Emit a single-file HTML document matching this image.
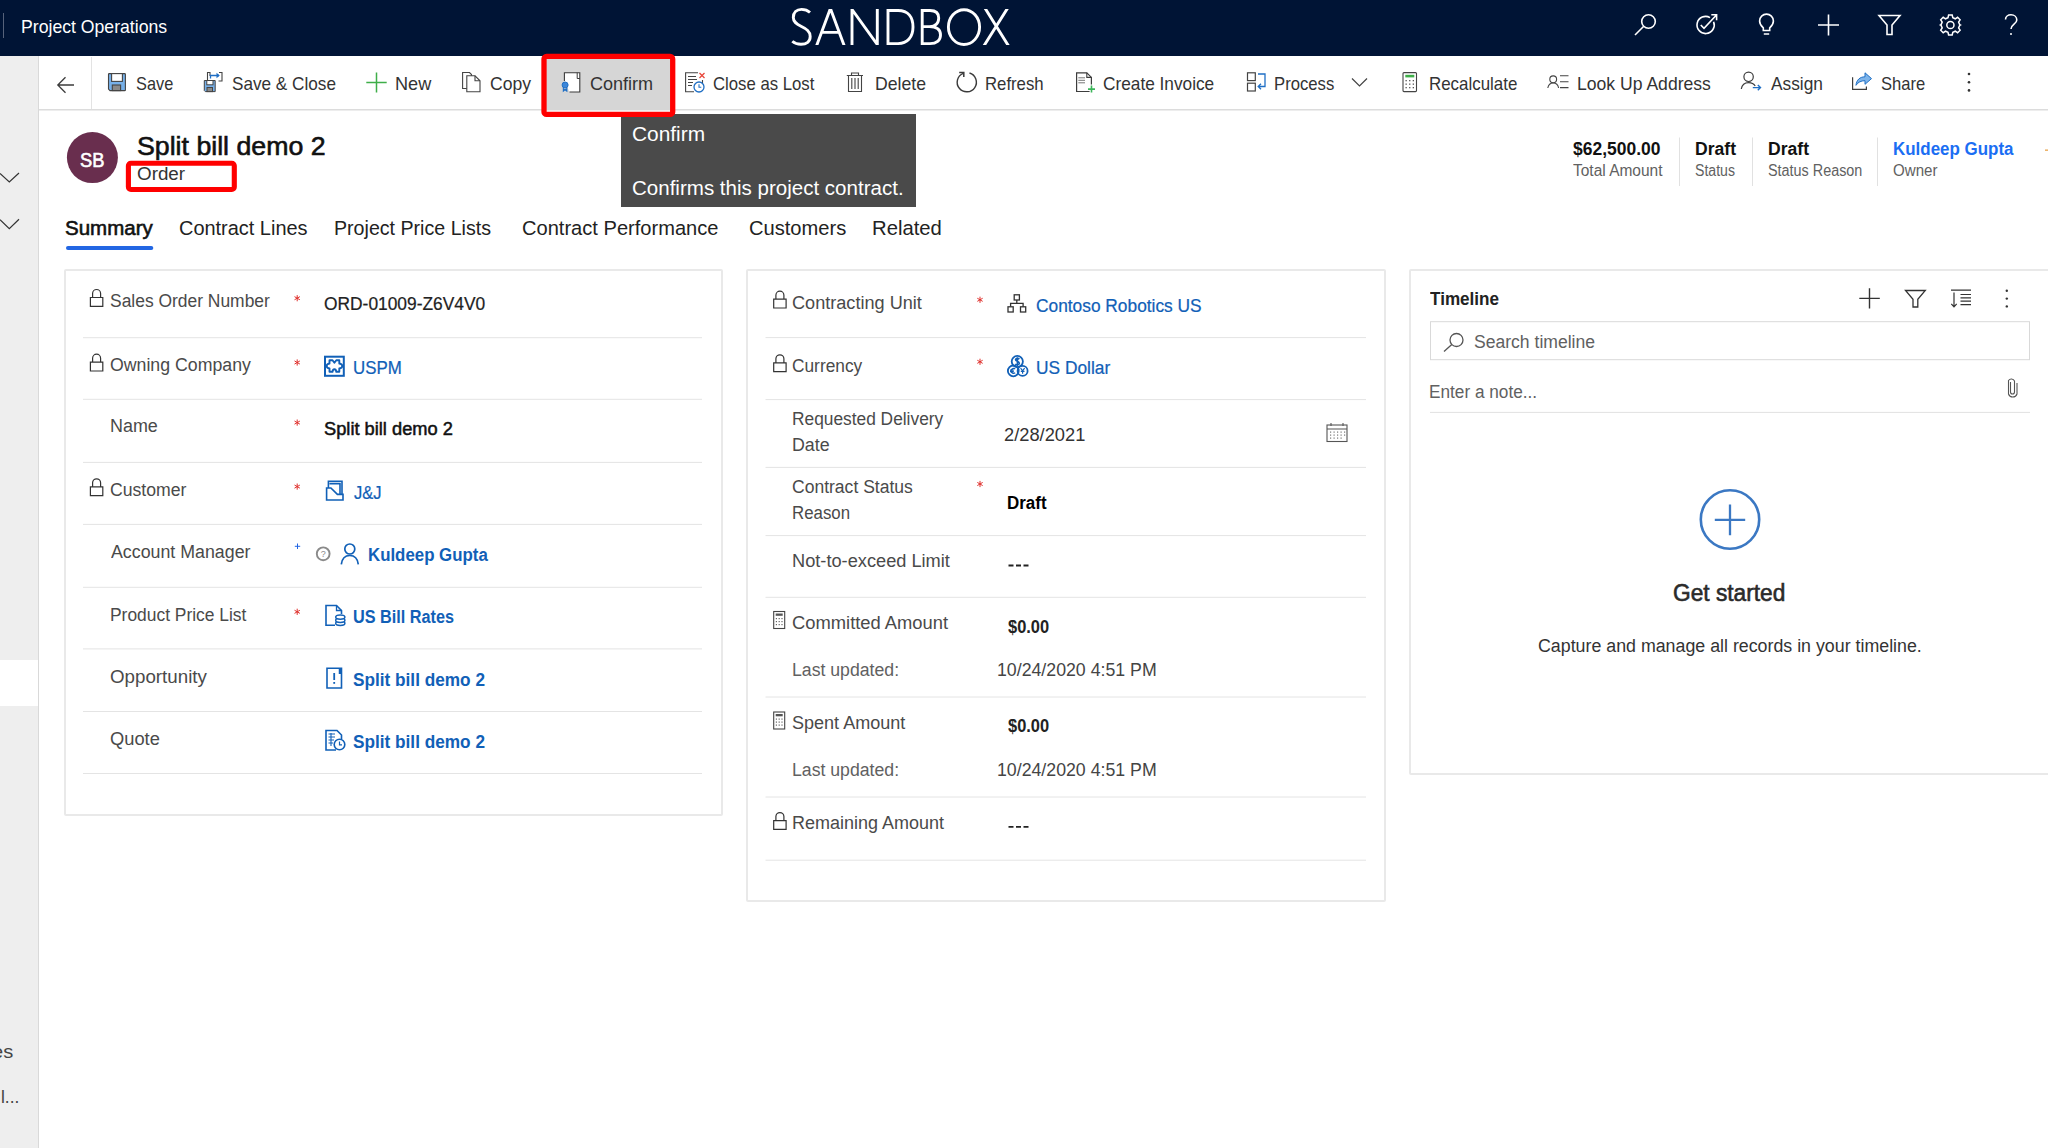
<!DOCTYPE html>
<html><head><meta charset="utf-8"><title>Split bill demo 2 - Project Operations</title>
<style>
html,body{margin:0;padding:0;}
body{width:2048px;height:1148px;overflow:hidden;position:relative;background:#fff;font-family:"Liberation Sans",sans-serif;}
.t{position:absolute;white-space:pre;line-height:1;transform-origin:0 0;font-family:"Liberation Sans",sans-serif;}
.abs{position:absolute;}
#top{left:0;top:0;width:2048px;height:56px;background:#001435;}
#side{left:0;top:56px;width:38px;height:1092px;background:#eeeeee;border-right:1px solid #d9d9d9;}
#sidewhite{left:0;top:660px;width:38px;height:45.5px;background:#fff;}
#cmdline{left:39px;top:109px;width:2009px;height:1px;background:#dcdcdc;}
#cmdline2{left:39px;top:110px;width:2009px;height:1px;background:#ededed;}
.sec{position:absolute;border:2px solid #e9e9e9;border-radius:2px;box-sizing:border-box;background:#fff;}
#tip{left:621px;top:114px;width:295px;height:93px;background:#4a4a4a;}
#hl{left:546px;top:59px;width:124px;height:51px;background:#d6d6d6;}
svg{position:absolute;left:0;top:0;overflow:visible;}
</style></head>
<body>
<div id="top" class="abs"></div>
<div id="side" class="abs"></div>
<div id="sidewhite" class="abs"></div>
<div id="cmdline" class="abs"></div>
<div id="cmdline2" class="abs"></div>
<div id="hl" class="abs"></div>
<div class="sec" style="left:64px;top:269px;width:659px;height:547px;"></div>
<div class="sec" style="left:746px;top:269px;width:640px;height:633px;"></div>
<div class="sec" style="left:1409px;top:269px;width:660px;height:506px;"></div>
<svg width="2048" height="1148" viewBox="0 0 2048 1148">
<!-- top bar -->
<line x1="3.5" y1="13" x2="3.5" y2="38" stroke="#56627a" stroke-width="1"/>
<defs><clipPath id="capclip"><rect x="780" y="9.1" width="240" height="36"/></clipPath></defs>
<g fill="none" stroke="#fff" stroke-width="2.9" stroke-linejoin="miter">
 <path d="M810 12.5 C807.5 10.2 804.5 9.4 801.5 9.4 C796.5 9.4 793.3 12.5 793.3 17.5 C793.3 22 796.5 24 801 26.3 C806.5 29 810.2 31.2 810.2 36.5 C810.2 41.5 806.5 44.3 801 44.3 C797.5 44.3 794.5 43.3 792.3 41.3"/>
 <path clip-path="url(#capclip)" d="M816.3 46.5 L830.4 8.5 L844.5 46.5 M821.6 32.4 H839.3"/>
 <path clip-path="url(#capclip)" d="M852 46 V9.5 L877.3 44.5 M877.3 8 V46"/>
 <path d="M888 10.5 H898 C908.5 10.5 913 17.5 913 27 C913 37 907.5 43.6 898 43.6 H888 Z"/>
 <path d="M922.2 45.1 V10.5 H930 C935.5 10.5 938.7 13 938.7 18 C938.7 23.5 935 26.6 929.5 26.6 H922.2 M929.5 26.6 C936.5 26.6 940.5 29.5 940.5 35 C940.5 40.5 936.5 43.6 930 43.6 H922.2"/>
 <ellipse cx="964" cy="27.1" rx="15.6" ry="17.4"/>
 <path clip-path="url(#capclip)" d="M984.6 7.5 L1009 46.7 M1008 7.5 L983.4 46.7"/>
</g>
<g fill="none" stroke="#fff" stroke-width="1.6">
 <!-- search -->
 <circle cx="1648.5" cy="21.5" r="6.8"/><path d="M1643.5 26.5 L1635 35"/>
 <!-- task -->
 <path d="M1713.6 21.8 A8.6 8.6 0 1 1 1710 17.6"/><path d="M1700.8 25 L1704 28.3 L1716 15.5 M1711.3 14.8 H1716.6 V20.2"/>
 <!-- bulb -->
 <path d="M1763.3 30.5 V27.8 C1761 25.8 1759.6 23.6 1759.6 21 A6.9 6.9 0 0 1 1773.4 21 C1773.4 23.6 1772 25.8 1769.7 27.8 V30.5 Z M1763.8 34 H1769.2"/>
 <!-- plus -->
 <path d="M1828.5 14.5 V35.5 M1818 25 H1839"/>
 <!-- filter -->
 <path d="M1879 15.5 H1900 L1892 25 V34.5 H1887 V25 Z"/>
 <!-- help -->
 <path d="M2005.5 19.5 C2005.5 16.5 2008 14.8 2011 14.8 C2014.3 14.8 2016.8 17 2016.8 20 C2016.8 24 2011 24.5 2011 29"/>
</g>
<circle cx="2011" cy="34" r="1" fill="#fff"/>
<!-- gear -->
<g transform="translate(1950.4 25)" fill="none" stroke="#fff" stroke-width="1.5">
 <path d="M-1.8 -10 H1.8 L2.4 -7.3 L4.9 -6.2 L7.2 -7.7 L9.7 -5.2 L8.2 -2.9 L9.3 -0.4 L10 0 V0 L9.3 0.4 L8.2 2.9 L9.7 5.2 L7.2 7.7 L4.9 6.2 L2.4 7.3 L1.8 10 H-1.8 L-2.4 7.3 L-4.9 6.2 L-7.2 7.7 L-9.7 5.2 L-8.2 2.9 L-9.3 0.4 L-10 0 L-9.3 -0.4 L-8.2 -2.9 L-9.7 -5.2 L-7.2 -7.7 L-4.9 -6.2 L-2.4 -7.3 Z"/>
 <circle r="3.6"/>
</g>

<!-- command bar -->
<line x1="91.5" y1="57" x2="91.5" y2="109" stroke="#e3e3e3" stroke-width="1"/>
<path d="M74 85 H57.8 M65.5 77.3 L57.8 85 L65.5 92.7" fill="none" stroke="#3b3b3b" stroke-width="1.3"/>
<!-- save -->
<g stroke="#444" stroke-width="1.1">
 <path d="M108.5 74.3 Q108.5 73.6 109.2 73.6 H124.6 Q125.4 73.6 125.4 74.4 V89.9 Q125.4 90.6 124.6 90.6 H110 L108.5 89.1 Z" fill="#77b0e8"/>
 <rect x="111.6" y="73.6" width="10.8" height="7.8" fill="#fff"/>
 <rect x="112.3" y="85" width="8.3" height="5.6" fill="#8a8a8a"/>
</g>
<!-- save & close -->
<g stroke="#444" stroke-width="1">
 <path d="M204.3 80.5 H215.2 V91.6 H205.3 L204.3 90.6 Z" fill="#77b0e8"/>
 <rect x="206.8" y="80.5" width="6.2" height="4.3" fill="#fff"/>
 <rect x="207" y="87.5" width="5.5" height="4.1" fill="#8a8a8a"/>
</g>
<path d="M210 76 V72.5 H207.5 V80 M218.5 81 H222 V72.5 H219" fill="none" stroke="#444" stroke-width="1.1"/>
<path d="M210.5 78.5 V75.5 H219" fill="none" stroke="#1f6fc5" stroke-width="1.3"/>
<path d="M216.5 72.8 L219.8 75.5 L216.5 78.2 Z" fill="#1f6fc5"/>
<!-- new -->
<path d="M376.5 72.5 V92.5 M366.3 82.5 H386.7" stroke="#3fae49" stroke-width="1.5" fill="none"/>
<!-- copy -->
<g fill="#fff" stroke="#444" stroke-width="1.1">
 <path d="M462.6 72.5 H469.5 L471.5 74.5 V88.5 H462.6 Z"/>
 <path d="M466.8 75.8 H475 L480 80.8 V91.8 H466.8 Z"/>
 <path d="M475 75.8 V80.8 H480" fill="none"/>
</g>
<!-- confirm -->
<path d="M564.4 81 V72.7 H579.8 V92 H569.5" fill="#fff" stroke="#3a3a3a" stroke-width="1.1"/>
<path d="M577.2 72.7 V78.5 M579.8 78.5 H577.2" stroke="#3a3a3a" stroke-width="1" fill="none"/>
<path d="M562.8 92.2 V87.5 L565 89.2 L567.4 87.5 V92.2 L565 90.6 Z" fill="#1f6fc5"/>
<circle cx="565.1" cy="85" r="3" fill="#3c86d8" stroke="#1f6fc5" stroke-width="1"/>
<!-- close as lost -->
<g fill="none" stroke="#444" stroke-width="1.1">
 <path d="M694 91.8 H685.6 V72.8 H698 M702.5 80 V84"/>
 <path d="M688 76.5 H696 M688 79.5 H697 M688 82.5 H693 M688 85.5 H692"/>
</g>
<path d="M699.5 73 L704.5 78 M704.5 73 L699.5 78" stroke="#e8463a" stroke-width="1.3"/>
<circle cx="699" cy="87" r="5" fill="#fff" stroke="#1f6fc5" stroke-width="1.3"/>
<path d="M699 84.3 V87.3 H701.3" stroke="#1f6fc5" stroke-width="1.1" fill="none"/>
<!-- delete -->
<g fill="none" stroke="#444" stroke-width="1.1">
 <path d="M846.8 75.5 H863 M851.5 75.5 V73 H858.5 V75.5 M848.5 75.5 V91.5 H861.5 V75.5 M851.8 78 V89 M855 78 V89 M858.2 78 V89"/>
</g>
<!-- refresh -->
<path d="M969.5 73 A9.6 9.6 0 1 1 963.2 73.3" fill="none" stroke="#3a3a3a" stroke-width="1.4"/>
<path d="M959.2 72.6 H963.8 V77" fill="none" stroke="#3a3a3a" stroke-width="1.5"/>
<!-- create invoice -->
<path d="M1089.6 91.5 H1076.6 V72.8 H1086.8 L1091.4 77.4 V84.4" fill="#fff" stroke="#3d3d3d" stroke-width="1.2"/>
<path d="M1086.8 72.8 V77.4 H1091.4" fill="none" stroke="#3d3d3d" stroke-width="1.1"/>
<path d="M1078.3 77.8 H1085 M1078.3 80.3 H1085 M1078.3 82.8 H1085" stroke="#777" stroke-width="1"/>
<path d="M1091.5 85.6 V92.6 M1088 89.1 H1095" stroke="#3cb55a" stroke-width="1.6"/>
<!-- process -->
<g fill="none" stroke="#444" stroke-width="1.2">
 <rect x="1247.5" y="72.8" width="7.8" height="7.8"/>
 <rect x="1247.5" y="83.2" width="7.8" height="7.8"/>
</g>
<path d="M1258 74 H1265 V86.5 H1258.5 M1261 83.8 L1258.2 86.5 L1261 89.2" fill="none" stroke="#1f6fc5" stroke-width="1.3"/>
<path d="M1352 78.5 L1359.5 86 L1367 78.5" fill="none" stroke="#444" stroke-width="1.2"/>
<!-- recalculate -->
<rect x="1403" y="72.6" width="13.5" height="19" rx="1" fill="#fff" stroke="#444" stroke-width="1.1"/>
<rect x="1405.3" y="74.8" width="9" height="2.6" fill="#3fae49"/>
<g fill="#555">
 <rect x="1405.5" y="80" width="1.3" height="1.3"/><rect x="1409.1" y="80" width="1.3" height="1.3"/><rect x="1412.7" y="80" width="1.3" height="1.3"/>
 <rect x="1405.5" y="83.5" width="1.3" height="1.3"/><rect x="1409.1" y="83.5" width="1.3" height="1.3"/><rect x="1412.7" y="83.5" width="1.3" height="1.3"/>
 <rect x="1405.5" y="87" width="1.3" height="1.3"/><rect x="1409.1" y="87" width="1.3" height="1.3"/><rect x="1412.7" y="87" width="1.3" height="1.3"/>
</g>
<!-- look up address -->
<g fill="none" stroke="#444" stroke-width="1.1">
 <circle cx="1553.2" cy="79.3" r="3.4"/>
 <path d="M1547.8 88 C1548.5 84.5 1550.5 83 1553.2 83 C1556 83 1558 84.5 1558.6 88"/>
 <path d="M1560 75.8 H1568.5 M1560 81.8 H1568.5 M1560 87.6 H1568.5"/>
</g>
<!-- assign -->
<g fill="none" stroke="#3d3d3d" stroke-width="1.2">
 <circle cx="1748.6" cy="76.8" r="4.7"/>
 <path d="M1741.3 89 C1742 84.8 1745 82.6 1748.6 82.6 C1751.6 82.6 1754 84 1755.2 86"/>
</g>
<path d="M1752.8 87.6 H1760.5 M1757.8 85 L1760.5 87.6 L1757.8 90.2" fill="none" stroke="#1f6fc5" stroke-width="1.4"/>
<!-- share -->
<path d="M1852.6 77.3 V89.4 H1866.4 V86.5" fill="none" stroke="#3d3d3d" stroke-width="1.2"/>
<path d="M1856 85.3 C1856.5 79.8 1860 76.8 1865 76.8 V72.8 L1871.5 78.6 L1865 84.3 V80.7 C1861 80.7 1858 82.2 1856 85.3 Z" fill="#7db4ea" stroke="#1f6fc5" stroke-width="1"/>
<!-- more -->
<g fill="#333"><circle cx="1969" cy="74" r="1.3"/><circle cx="1969" cy="82.2" r="1.3"/><circle cx="1969" cy="90.4" r="1.3"/></g>

<!-- sidebar chevrons -->
<path d="M0 173.5 L9.3 182 L19 173" fill="none" stroke="#333" stroke-width="1.2"/>
<path d="M0 219.7 L9.3 228.7 L19 219.3" fill="none" stroke="#333" stroke-width="1.2"/>

<!-- header -->
<circle cx="92.4" cy="157.6" r="25.5" fill="#692e4e"/>
<line x1="1679.5" y1="137.5" x2="1679.5" y2="186" stroke="#e1e1e1"/>
<line x1="1752.5" y1="137.5" x2="1752.5" y2="186" stroke="#e1e1e1"/>
<line x1="1877.5" y1="137.5" x2="1877.5" y2="186" stroke="#e1e1e1"/>
<rect x="2045" y="149.5" width="3" height="1.3" fill="#e8a24a"/>
<rect x="66" y="246" width="87.3" height="4" rx="2" fill="#2266e3"/>

<!-- section 1 dividers -->
<g stroke="#e4e4e4" stroke-width="1">
 <line x1="83" y1="337.7" x2="702" y2="337.7"/>
 <line x1="83" y1="399.3" x2="702" y2="399.3"/>
 <line x1="83" y1="462.4" x2="702" y2="462.4"/>
 <line x1="83" y1="524.4" x2="702" y2="524.4"/>
 <line x1="83" y1="587.3" x2="702" y2="587.3"/>
 <line x1="83" y1="648.9" x2="702" y2="648.9"/>
 <line x1="83" y1="711.5" x2="702" y2="711.5"/>
 <line x1="83" y1="773.5" x2="702" y2="773.5"/>
</g>
<!-- section 2 dividers -->
<g stroke="#e4e4e4" stroke-width="1">
 <line x1="765.5" y1="337.6" x2="1366" y2="337.6"/>
 <line x1="765.5" y1="399.6" x2="1366" y2="399.6"/>
 <line x1="765.5" y1="467.4" x2="1366" y2="467.4"/>
 <line x1="765.5" y1="535.6" x2="1366" y2="535.6"/>
 <line x1="765.5" y1="597.3" x2="1366" y2="597.3"/>
 <line x1="765.5" y1="697" x2="1366" y2="697"/>
 <line x1="765.5" y1="797" x2="1366" y2="797"/>
 <line x1="765.5" y1="860.2" x2="1366" y2="860.2"/>
</g>
<!-- locks -->
<g fill="none" stroke="#333" stroke-width="1.2">
 <path id="lk1" d="M90.4 297.5 H102.8 V306.3 H90.4 Z M92.6 297.5 V293.5 A4 4 0 0 1 100.6 293.5 V297.5"/>
 <path d="M90.4 362.2 H102.8 V371 H90.4 Z M92.6 362.2 V358.2 A4 4 0 0 1 100.6 358.2 V362.2"/>
 <path d="M90.4 486.8 H102.8 V495.6 H90.4 Z M92.6 486.8 V482.8 A4 4 0 0 1 100.6 482.8 V486.8"/>
 <path d="M773.7 299.2 H786.1 V308 H773.7 Z M775.9 299.2 V295.2 A4 4 0 0 1 783.9 295.2 V299.2"/>
 <path d="M773.7 362.8 H786.1 V371.6 H773.7 Z M775.9 362.8 V358.8 A4 4 0 0 1 783.9 358.8 V362.8"/>
 <path d="M773.7 820.6 H786.1 V829.4 H773.7 Z M775.9 820.6 V816.6 A4 4 0 0 1 783.9 816.6 V820.6"/>
</g>
<!-- asterisks -->
<path d="M297.20 295.10 L297.20 301.30 M294.52 296.65 L299.88 299.75 M299.88 296.65 L294.52 299.75 M297.20 359.40 L297.20 365.60 M294.52 360.95 L299.88 364.05 M299.88 360.95 L294.52 364.05 M297.20 419.50 L297.20 425.70 M294.52 421.05 L299.88 424.15 M299.88 421.05 L294.52 424.15 M297.20 483.50 L297.20 489.70 M294.52 485.05 L299.88 488.15 M299.88 485.05 L294.52 488.15 M297.20 608.70 L297.20 614.90 M294.52 610.25 L299.88 613.35 M299.88 610.25 L294.52 613.35 M980.00 296.70 L980.00 302.90 M977.32 298.25 L982.68 301.35 M982.68 298.25 L977.32 301.35 M980.00 358.70 L980.00 364.90 M977.32 360.25 L982.68 363.35 M982.68 360.25 L977.32 363.35 M980.00 480.90 L980.00 487.10 M977.32 482.45 L982.68 485.55 M982.68 482.45 L977.32 485.55 " stroke="#e0312d" stroke-width="1.0" fill="none"/>
<path d="M297.5 543.5 V549 M294.8 546.3 H300.2" stroke="#2266e3" stroke-width="1"/>
<!-- USPM icon -->
<rect x="325" y="356.7" width="18.8" height="19.1" fill="none" stroke="#1160b7" stroke-width="2"/>
<path d="M329.5 360.3 H332.5 L334.4 362.8 L336.3 360.3 H339.3 V363.5 Q342.3 364 342.3 366 Q342.3 368 339.3 368.5 V371.8 H336.3 Q336 369.3 334.4 369.3 Q332.8 369.3 332.5 371.8 H329.5 V368.5 Q326.6 368 326.6 366 Q326.6 364 329.5 363.5 Z" fill="none" stroke="#1160b7" stroke-width="1.9" stroke-linejoin="round"/>
<!-- J&J account icon -->
<path d="M326.6 500 V488 H330.9 L337.4 494.4 H343 V500 Z M328.4 487.5 V481.3 H342 V494 M329.5 483.6 H340 V493.5" fill="none" stroke="#1160b7" stroke-width="1.6" stroke-linejoin="miter"/>
<!-- ? circle -->
<circle cx="323.2" cy="553.8" r="6.4" fill="none" stroke="#8a8a8a" stroke-width="1.9"/>
<text x="323.2" y="557.2" font-family="Liberation Sans" font-size="9" fill="#8a8a8a" text-anchor="middle">?</text>
<!-- person -->
<circle cx="349.8" cy="549" r="5" fill="none" stroke="#1160b7" stroke-width="1.7"/>
<path d="M341.3 564.4 C342 558.5 345.2 555.5 349.8 555.5 C354.4 555.5 357.6 558.5 358.3 564.4" fill="none" stroke="#1160b7" stroke-width="1.7"/>
<!-- price list -->
<path d="M335 625.2 H326 V605.5 H336.5 L341.5 610.5 V614" fill="none" stroke="#1160b7" stroke-width="1.6"/>
<path d="M336.5 605.5 V610.5 H341.5" fill="none" stroke="#1160b7" stroke-width="1.3"/>
<g fill="#fff" stroke="#1160b7" stroke-width="1.5">
 <ellipse cx="340.3" cy="623.3" rx="4.6" ry="2.2"/>
 <ellipse cx="340.3" cy="620.2" rx="4.6" ry="2.2"/>
 <ellipse cx="340.3" cy="617.1" rx="4.6" ry="2.2"/>
</g>
<!-- opportunity -->
<path d="M327 668.3 H341.5 V688 H327 Z" fill="none" stroke="#1160b7" stroke-width="1.6"/>
<path d="M340 668 V674" stroke="#1160b7" stroke-width="2.5"/>
<path d="M334.2 673 V680" stroke="#1160b7" stroke-width="1.8"/><rect x="333.3" y="682" width="1.8" height="1.8" fill="#1160b7"/>
<!-- quote -->
<path d="M336 750 H326 V730.5 H337 L341.5 735 V739" fill="none" stroke="#1160b7" stroke-width="1.6"/>
<path d="M328.5 734 H335 M328.5 737 H335 M328.5 740 H334 M328.5 743 H333 M331 733 V746" stroke="#1160b7" stroke-width="1.1"/>
<circle cx="339.5" cy="744.5" r="5.3" fill="#fff" stroke="#1160b7" stroke-width="1.6"/>
<path d="M339.5 741.5 V744.8 H342" fill="none" stroke="#1160b7" stroke-width="1.2"/>
<!-- org chart -->
<g fill="none" stroke="#333" stroke-width="1.3">
 <rect x="1014.2" y="294.8" width="5.2" height="5.2"/>
 <rect x="1008" y="306.8" width="5.2" height="5.2"/>
 <rect x="1020.5" y="306.8" width="5.2" height="5.2"/>
 <path d="M1016.8 300 V303.4 M1010.6 306.8 V303.4 H1023.1 V306.8"/>
</g>
<!-- currency -->
<g fill="none" stroke="#1160b7" stroke-width="1.8">
 <circle cx="1017.3" cy="361.5" r="5.6"/>
 <circle cx="1022.6" cy="370.9" r="5"/>
 <circle cx="1013.3" cy="370.9" r="5.4"/>
</g>
<path d="M1019.3 359.2 C1018.5 358 1016 358 1015.6 359.5 C1015.2 361.2 1019.7 361.5 1019.3 363.5 C1018.9 365.2 1016.3 365 1015.3 364 M1017.4 357.3 V366" fill="none" stroke="#1160b7" stroke-width="1.6"/>
<path d="M1015.2 369 C1014 368 1011.3 368.3 1011.1 370.9 C1011.1 373.4 1013.8 373.9 1015.2 372.7 M1010 370.2 H1013.8 M1010 371.7 H1013.8" fill="none" stroke="#1160b7" stroke-width="1.3"/>
<path d="M1020.6 368.2 L1022.6 370.8 L1024.6 368.2 M1022.6 370.8 V373.8 M1020.8 371.3 H1024.5" fill="none" stroke="#1160b7" stroke-width="1.2"/>
<!-- calendar -->
<g fill="none" stroke="#555" stroke-width="1.1">
 <rect x="1327" y="425" width="20" height="16.5"/>
 <path d="M1327 429 H1347 M1331 423 V426 M1343 423 V426"/>
</g>
<g fill="#777">
 <rect x="1330" y="431.5" width="1.2" height="1.2"/><rect x="1333.5" y="431.5" width="1.2" height="1.2"/><rect x="1337" y="431.5" width="1.2" height="1.2"/><rect x="1340.5" y="431.5" width="1.2" height="1.2"/><rect x="1344" y="431.5" width="1.2" height="1.2"/>
 <rect x="1330" y="434.5" width="1.2" height="1.2"/><rect x="1333.5" y="434.5" width="1.2" height="1.2"/><rect x="1337" y="434.5" width="1.2" height="1.2"/><rect x="1340.5" y="434.5" width="1.2" height="1.2"/><rect x="1344" y="434.5" width="1.2" height="1.2"/>
 <rect x="1330" y="437.5" width="1.2" height="1.2"/><rect x="1333.5" y="437.5" width="1.2" height="1.2"/><rect x="1337" y="437.5" width="1.2" height="1.2"/><rect x="1340.5" y="437.5" width="1.2" height="1.2"/>
</g>
<!-- dashes -->
<path d="M1008.5 565.5 H1013.5 M1016 565.5 H1021 M1023.5 565.5 H1028.5" stroke="#222" stroke-width="1.8"/>
<path d="M1008.5 826.8 H1013.5 M1016 826.8 H1021 M1023.5 826.8 H1028.5" stroke="#222" stroke-width="1.8"/>
<!-- calculators -->
<g id="calc1">
 <rect x="773.7" y="611.5" width="11" height="17" fill="#fff" stroke="#444" stroke-width="1.1"/>
 <rect x="775.7" y="613.5" width="7" height="2.3" fill="#555"/>
 <g fill="#666"><rect x="775.8" y="618" width="1.2" height="1.2"/><rect x="778.6" y="618" width="1.2" height="1.2"/><rect x="781.4" y="618" width="1.2" height="1.2"/><rect x="775.8" y="621" width="1.2" height="1.2"/><rect x="778.6" y="621" width="1.2" height="1.2"/><rect x="781.4" y="621" width="1.2" height="1.2"/><rect x="775.8" y="624" width="1.2" height="1.2"/><rect x="778.6" y="624" width="1.2" height="1.2"/><rect x="781.4" y="624" width="1.2" height="1.2"/></g>
</g>
<use href="#calc1" transform="translate(0 100.5)"/>

<!-- timeline -->
<path d="M1869.5 288.3 V308.5 M1859.3 298.4 H1879.8" stroke="#333" stroke-width="1.4" fill="none"/>
<path d="M1905.5 290.5 H1925.3 L1917.8 299.3 V307 H1913 V299.3 Z" stroke="#333" stroke-width="1.3" fill="none"/>
<path d="M1951 290.2 H1971 M1954 292.5 V306.5 M1951.3 303.8 L1954 306.8 L1956.7 303.8 M1960.5 294.5 H1971 M1960.5 297.8 H1971 M1960.5 301.2 H1971 M1960.5 304.6 H1971" stroke="#333" stroke-width="1.2" fill="none"/>
<g fill="#333"><circle cx="2006.8" cy="290.8" r="1.2"/><circle cx="2006.8" cy="298.6" r="1.2"/><circle cx="2006.8" cy="306.4" r="1.2"/></g>
<rect x="1430.5" y="321.7" width="599" height="38" fill="none" stroke="#d9d9d9" stroke-width="1"/>
<circle cx="1456.5" cy="340" r="6.5" fill="none" stroke="#555" stroke-width="1.3"/>
<path d="M1451.8 344.6 L1444 351.5" stroke="#555" stroke-width="1.3"/>
<path d="M2010.5 382 V392 A2 2 0 0 0 2014.5 392 V381 A3.5 3.5 0 0 0 2008.5 380.5 V394 A4.5 4.5 0 0 0 2017 394 V383" fill="none" stroke="#555" stroke-width="1.1"/>
<line x1="1430" y1="412.4" x2="2030" y2="412.4" stroke="#e1e1e1"/>
<circle cx="1730" cy="519.5" r="29.2" fill="none" stroke="#3b78c3" stroke-width="2.6"/>
<path d="M1730 504.5 V535.2 M1714.8 519.8 H1745.2" stroke="#3b78c3" stroke-width="2.3"/>
</svg>

<div class=t style='left:21.00px;top:18.34px;font-size:18.5px;font-weight:400;color:#fff;transform:scaleX(0.9539);'>Project Operations</div>
<div class=t style='left:136.00px;top:74.94px;font-size:18.5px;font-weight:400;color:#333;transform:scaleX(0.8833);'>Save</div>
<div class=t style='left:232.00px;top:74.94px;font-size:18.5px;font-weight:400;color:#333;transform:scaleX(0.9273);'>Save &amp; Close</div>
<div class=t style='left:395.00px;top:74.94px;font-size:18.5px;font-weight:400;color:#333;transform:scaleX(0.9781);'>New</div>
<div class=t style='left:490.00px;top:74.94px;font-size:18.5px;font-weight:400;color:#333;transform:scaleX(0.9478);'>Copy</div>
<div class=t style='left:590.00px;top:74.94px;font-size:18.5px;font-weight:400;color:#333;transform:scaleX(0.9747);'>Confirm</div>
<div class=t style='left:713.00px;top:74.94px;font-size:18.5px;font-weight:400;color:#333;transform:scaleX(0.9045);'>Close as Lost</div>
<div class=t style='left:875.00px;top:74.94px;font-size:18.5px;font-weight:400;color:#333;transform:scaleX(0.9540);'>Delete</div>
<div class=t style='left:985.00px;top:74.94px;font-size:18.5px;font-weight:400;color:#333;transform:scaleX(0.9048);'>Refresh</div>
<div class=t style='left:1103.00px;top:74.94px;font-size:18.5px;font-weight:400;color:#333;transform:scaleX(0.9322);'>Create Invoice</div>
<div class=t style='left:1274.00px;top:74.94px;font-size:18.5px;font-weight:400;color:#333;transform:scaleX(0.9016);'>Process</div>
<div class=t style='left:1429.00px;top:74.94px;font-size:18.5px;font-weight:400;color:#333;transform:scaleX(0.9137);'>Recalculate</div>
<div class=t style='left:1577.00px;top:74.94px;font-size:18.5px;font-weight:400;color:#333;transform:scaleX(0.9501);'>Look Up Address</div>
<div class=t style='left:1771.00px;top:74.94px;font-size:18.5px;font-weight:400;color:#333;transform:scaleX(0.9348);'>Assign</div>
<div class=t style='left:1881.00px;top:74.94px;font-size:18.5px;font-weight:400;color:#333;transform:scaleX(0.8958);'>Share</div>
<div class=t style='left:79.50px;top:149.67px;font-size:20px;-webkit-text-stroke:0.6px #fff;color:#fff;transform:scaleX(0.9161);'>SB</div>
<div class=t style='left:137.00px;top:133.29px;font-size:26px;-webkit-text-stroke:0.6px #111;color:#111;transform:scaleX(1.0275);'>Split bill demo 2</div>
<div class=t style='left:137.00px;top:165.36px;font-size:18px;font-weight:400;color:#333;transform:scaleX(1.0447);'>Order</div>
<div class=t style='left:65.00px;top:217.65px;font-size:20.5px;-webkit-text-stroke:0.6px #111;color:#111;transform:scaleX(1.0001);'>Summary</div>
<div class=t style='left:179.00px;top:217.65px;font-size:20.5px;font-weight:400;color:#222;transform:scaleX(0.9723);'>Contract Lines</div>
<div class=t style='left:334.25px;top:217.65px;font-size:20.5px;font-weight:400;color:#222;transform:scaleX(0.9568);'>Project Price Lists</div>
<div class=t style='left:521.50px;top:217.65px;font-size:20.5px;font-weight:400;color:#222;transform:scaleX(0.9799);'>Contract Performance</div>
<div class=t style='left:748.50px;top:217.65px;font-size:20.5px;font-weight:400;color:#222;transform:scaleX(0.9815);'>Customers</div>
<div class=t style='left:871.75px;top:217.65px;font-size:20.5px;font-weight:400;color:#222;transform:scaleX(0.9884);'>Related</div>
<div class=t style='left:1573.00px;top:139.56px;font-size:18px;font-weight:700;color:#111;transform:scaleX(0.9708);'>$62,500.00</div>
<div class=t style='left:1573.00px;top:162.66px;font-size:16px;font-weight:400;color:#616161;transform:scaleX(0.9675);'>Total Amount</div>
<div class=t style='left:1695.00px;top:139.56px;font-size:18px;font-weight:700;color:#111;transform:scaleX(0.9756);'>Draft</div>
<div class=t style='left:1695.00px;top:162.66px;font-size:16px;font-weight:400;color:#616161;transform:scaleX(0.8821);'>Status</div>
<div class=t style='left:1768.00px;top:139.56px;font-size:18px;font-weight:700;color:#111;transform:scaleX(0.9756);'>Draft</div>
<div class=t style='left:1768.00px;top:162.66px;font-size:16px;font-weight:400;color:#616161;transform:scaleX(0.8991);'>Status Reason</div>
<div class=t style='left:1893.00px;top:139.56px;font-size:18px;font-weight:700;color:#1b6ef3;transform:scaleX(0.9417);'>Kuldeep Gupta</div>
<div class=t style='left:1893.00px;top:162.66px;font-size:16px;font-weight:400;color:#616161;transform:scaleX(0.9437);'>Owner</div>
<div class=t style='left:109.50px;top:291.66px;font-size:18px;font-weight:400;color:#4a4a4a;transform:scaleX(0.9683);'>Sales Order Number</div>
<div class=t style='left:109.50px;top:356.01px;font-size:18px;font-weight:400;color:#4a4a4a;transform:scaleX(0.9845);'>Owning Company</div>
<div class=t style='left:109.50px;top:416.96px;font-size:18px;font-weight:400;color:#4a4a4a;transform:scaleX(0.9959);'>Name</div>
<div class=t style='left:109.50px;top:480.96px;font-size:18px;font-weight:400;color:#4a4a4a;transform:scaleX(0.9792);'>Customer</div>
<div class=t style='left:110.50px;top:542.76px;font-size:18px;font-weight:400;color:#4a4a4a;transform:scaleX(0.9887);'>Account Manager</div>
<div class=t style='left:109.50px;top:605.96px;font-size:18px;font-weight:400;color:#4a4a4a;transform:scaleX(0.9669);'>Product Price List</div>
<div class=t style='left:109.50px;top:667.56px;font-size:18px;font-weight:400;color:#4a4a4a;transform:scaleX(1.0413);'>Opportunity</div>
<div class=t style='left:109.50px;top:729.76px;font-size:18px;font-weight:400;color:#4a4a4a;transform:scaleX(1.0168);'>Quote</div>
<div class=t style='left:323.50px;top:295.36px;font-size:18px;-webkit-text-stroke:0.22px #222;color:#222;transform:scaleX(0.9651);'>ORD-01009-Z6V4V0</div>
<div class=t style='left:353.00px;top:358.66px;font-size:18px;-webkit-text-stroke:0.22px #1160b7;color:#1160b7;transform:scaleX(0.9361);'>USPM</div>
<div class=t style='left:323.50px;top:419.56px;font-size:18px;-webkit-text-stroke:0.5px #111;color:#111;transform:scaleX(1.0143);'>Split bill demo 2</div>
<div class=t style='left:353.50px;top:483.86px;font-size:18px;-webkit-text-stroke:0.22px #1160b7;color:#1160b7;transform:scaleX(0.9177);'>J&amp;J</div>
<div class=t style='left:368.00px;top:545.96px;font-size:18px;font-weight:700;color:#1160b7;transform:scaleX(0.9355);'>Kuldeep Gupta</div>
<div class=t style='left:353.00px;top:608.06px;font-size:18px;font-weight:700;color:#1160b7;transform:scaleX(0.9018);'>US Bill Rates</div>
<div class=t style='left:353.00px;top:670.76px;font-size:18px;font-weight:700;color:#1160b7;transform:scaleX(0.9562);'>Split bill demo 2</div>
<div class=t style='left:353.00px;top:733.06px;font-size:18px;font-weight:700;color:#1160b7;transform:scaleX(0.9562);'>Split bill demo 2</div>
<div class=t style='left:792.00px;top:293.56px;font-size:18px;font-weight:400;color:#4a4a4a;transform:scaleX(1.0063);'>Contracting Unit</div>
<div class=t style='left:1036.00px;top:297.26px;font-size:18px;-webkit-text-stroke:0.22px #1160b7;color:#1160b7;transform:scaleX(0.9626);'>Contoso Robotics US</div>
<div class=t style='left:792.00px;top:356.56px;font-size:18px;font-weight:400;color:#4a4a4a;transform:scaleX(0.9612);'>Currency</div>
<div class=t style='left:1036.00px;top:359.06px;font-size:18px;-webkit-text-stroke:0.22px #1160b7;color:#1160b7;transform:scaleX(0.9632);'>US Dollar</div>
<div class=t style='left:792.00px;top:410.26px;font-size:18px;font-weight:400;color:#4a4a4a;transform:scaleX(0.9626);'>Requested Delivery</div>
<div class=t style='left:792.00px;top:435.66px;font-size:18px;font-weight:400;color:#4a4a4a;transform:scaleX(0.9895);'>Date</div>
<div class=t style='left:1003.50px;top:425.96px;font-size:18px;font-weight:400;color:#333;transform:scaleX(1.0154);'>2/28/2021</div>
<div class=t style='left:792.00px;top:477.76px;font-size:18px;font-weight:400;color:#4a4a4a;transform:scaleX(0.9740);'>Contract Status</div>
<div class=t style='left:792.00px;top:503.76px;font-size:18px;font-weight:400;color:#4a4a4a;transform:scaleX(0.9360);'>Reason</div>
<div class=t style='left:1007.00px;top:493.56px;font-size:18px;font-weight:700;color:#000;transform:scaleX(0.9417);'>Draft</div>
<div class=t style='left:792.00px;top:552.16px;font-size:18px;font-weight:400;color:#4a4a4a;transform:scaleX(1.0118);'>Not-to-exceed Limit</div>
<div class=t style='left:792.00px;top:613.76px;font-size:18px;font-weight:400;color:#4a4a4a;transform:scaleX(1.0198);'>Committed Amount</div>
<div class=t style='left:1008.00px;top:617.56px;font-size:18px;font-weight:700;color:#222;transform:scaleX(0.9138);'>$0.00</div>
<div class=t style='left:792.00px;top:660.76px;font-size:18px;font-weight:400;color:#616161;transform:scaleX(0.9812);'>Last updated:</div>
<div class=t style='left:997.00px;top:660.76px;font-size:18px;font-weight:400;color:#444;transform:scaleX(0.9849);'>10/24/2020 4:51 PM</div>
<div class=t style='left:792.00px;top:713.76px;font-size:18px;font-weight:400;color:#4a4a4a;transform:scaleX(1.0018);'>Spent Amount</div>
<div class=t style='left:1008.00px;top:717.46px;font-size:18px;font-weight:700;color:#222;transform:scaleX(0.9138);'>$0.00</div>
<div class=t style='left:792.00px;top:760.76px;font-size:18px;font-weight:400;color:#616161;transform:scaleX(0.9812);'>Last updated:</div>
<div class=t style='left:997.00px;top:760.76px;font-size:18px;font-weight:400;color:#444;transform:scaleX(0.9849);'>10/24/2020 4:51 PM</div>
<div class=t style='left:792.00px;top:813.96px;font-size:18px;font-weight:400;color:#4a4a4a;transform:scaleX(0.9987);'>Remaining Amount</div>
<div class=t style='left:1430.00px;top:289.96px;font-size:18px;font-weight:700;color:#222;transform:scaleX(0.9502);'>Timeline</div>
<div class=t style='left:1473.50px;top:333.06px;font-size:18px;font-weight:400;color:#616161;transform:scaleX(0.9754);'>Search timeline</div>
<div class=t style='left:1429.00px;top:382.86px;font-size:18px;font-weight:400;color:#616161;transform:scaleX(0.9564);'>Enter a note...</div>
<div class=t style='left:1673.00px;top:581.81px;font-size:23.5px;-webkit-text-stroke:0.6px #2a2a2a;color:#2a2a2a;transform:scaleX(0.9667);'>Get started</div>
<div class=t style='left:1537.50px;top:636.86px;font-size:18px;font-weight:400;color:#333;transform:scaleX(0.9886);'>Capture and manage all records in your timeline.</div>
<div class=t style='left:-8.50px;top:1042.56px;font-size:18px;font-weight:400;color:#444;transform:scaleX(1.1139);'>es</div>
<div class=t style='left:0.50px;top:1087.76px;font-size:18px;font-weight:400;color:#444;transform:scaleX(0.9639);'>l...</div>
<div id="tip" class="abs"></div>
<div class=t style='left:632.00px;top:124.07px;font-size:20px;font-weight:400;color:#fff;transform:scaleX(1.0442);'>Confirm</div>
<div class=t style='left:632.00px;top:177.87px;font-size:20px;font-weight:400;color:#fff;transform:scaleX(1.0267);'>Confirms this project contract.</div>
<svg width="2048" height="1148" viewBox="0 0 2048 1148" style="z-index:10">
<rect x="544" y="56.4" width="128.7" height="58" rx="2.5" fill="none" stroke="#ff0000" stroke-width="5.3"/>
<rect x="128.4" y="163.2" width="105.9" height="26.3" rx="2.5" fill="none" stroke="#ff0000" stroke-width="5.1"/>
</svg>
</body></html>
